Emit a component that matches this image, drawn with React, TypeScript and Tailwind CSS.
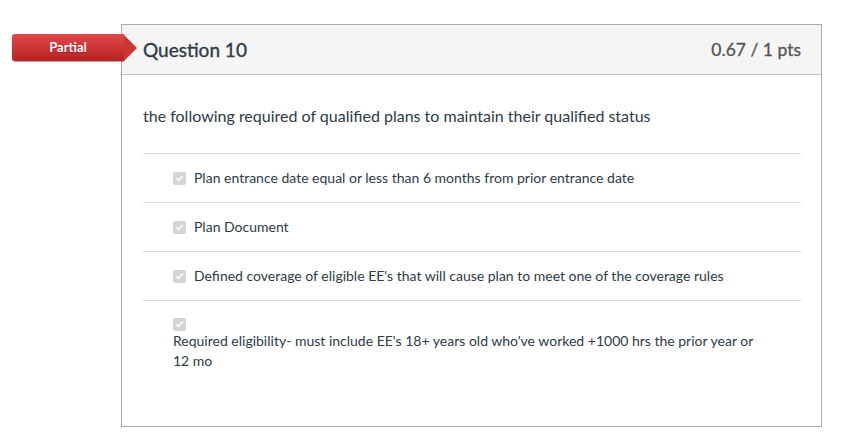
import React from "react";

function Check({ className = "" }: { className?: string }) {
  return (
    <span className={`flex h-[13px] w-[13px] shrink-0 items-center justify-center rounded-[2px] bg-[#d5d5d5] ${className}`}>
      <svg width="9" height="9" viewBox="0 0 10 10" fill="none">
        <path d="M1.8 5.2 L4 7.3 L8.3 2.6" stroke="#ffffff" strokeWidth="1.6" strokeLinecap="round" strokeLinejoin="round" />
      </svg>
    </span>
  );
}

export default function App() {
  const answers = [
    "Plan entrance date equal or less than 6 months from prior entrance date",
    "Plan Document",
    "Defined coverage of eligible EE's that will cause plan to meet one of the coverage rules",
  ];
  return (
    <div className="h-[448px] w-[868px] bg-white pl-[121px] pt-[24px] text-[#2d3b45]" style={{ fontFamily: "Lato, 'Open Sans', sans-serif" }}>
      <div className="relative h-[403px] w-[701px] border border-[#aaaaaa]">
        <div className="absolute left-[-110px] top-[9px] flex h-[27px] items-center">
          <div className="flex h-[27px] w-[112px] items-center justify-center rounded-l-[3px] bg-gradient-to-b from-[#e04848] to-[#b82222] text-[13px] font-bold text-white shadow-[0_1px_1px_rgba(0,0,0,0.35)]" style={{ textShadow: "0 1px 1px rgba(0,0,0,0.3)" }}>
            Partial
          </div>
          <div className="h-0 w-0 border-y-[13.5px] border-l-[13px] border-y-transparent border-l-[#cd3434]" />
        </div>
        <div className="flex h-[50px] items-center justify-between border-b border-[#c2c2c2] bg-[#f5f5f5] pl-[21px] pr-[20px]">
          <div className="text-[19px] font-normal leading-none text-[#2d3b45]" style={{ WebkitTextStroke: "0.35px #2d3b45" }}>Question 10</div>
          <div className="text-[17.5px] font-normal leading-none text-[#555555]" style={{ WebkitTextStroke: "0.3px #555555" }}>0.67 / 1 pts</div>
        </div>
        <div className="pl-[21px] pr-[20px]">
          <div className="pt-[30px] pb-[26px] text-[16px] leading-[22px] text-[#2d3b45]">
            the following required of qualified plans to maintain their qualified status
          </div>
          {answers.map((a) => (
            <div key={a} className="flex h-[49px] items-center border-t border-[#dddddd] pl-[30px] text-[14px] text-[#2d3b45]">
              <Check className="mr-[8px]" />
              <span className="-mt-[1px]">{a}</span>
            </div>
          ))}
          <div className="border-t border-[#dddddd] pl-[30px] pt-[17px] pr-[40px] text-[14px] leading-[20px] text-[#2d3b45]">
            <Check />
            <div className="w-[590px]">
              Required eligibility- must include EE's 18+ years old who've worked +1000 hrs the prior year or 12 mo
            </div>
          </div>
        </div>
      </div>
    </div>
  );
}
